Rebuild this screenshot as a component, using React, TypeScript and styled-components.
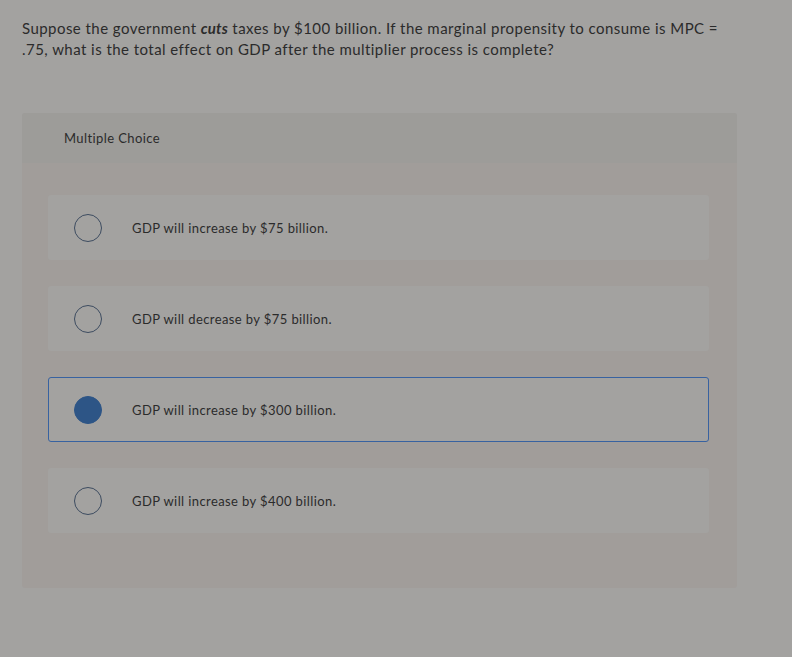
import styled, { createGlobalStyle } from 'styled-components'

const GlobalStyle = createGlobalStyle`
    html, body {
        margin: 0;
        padding: 0;
        background: #a3a2a0;
    }
    body {
        font-family: Lato, "Open Sans", "Liberation Sans", sans-serif;
        color: #2b2b2b;
    }
`

interface ChoiceItem {
    label: string
    selected?: boolean
}

const choices: ChoiceItem[] = [
    { label: 'GDP will increase by $75 billion.' },
    { label: 'GDP will decrease by $75 billion.' },
    { label: 'GDP will increase by $300 billion.', selected: true },
    { label: 'GDP will increase by $400 billion.' },
]

const App = () => {
    return (
        <>
            <GlobalStyle />
            <Page>
                <Question>
                    Suppose the government <Emph>cuts</Emph> taxes by $100 billion. If the marginal propensity to consume is MPC =
                    <br />
                    .75, what is the total effect on GDP after the multiplier process is complete?
                </Question>
                <Card>
                    <CardHeader>Multiple Choice</CardHeader>
                    <ChoiceList>
                        {
                            choices.map(choice => {
                                return (
                                    <ChoiceRow key={choice.label} selected={choice.selected}>
                                        <Radio selected={choice.selected} />
                                        <ChoiceText>{choice.label}</ChoiceText>
                                    </ChoiceRow>
                                )
                            })
                        }
                    </ChoiceList>
                </Card>
            </Page>
        </>
    )
}
export default App


const Page = styled.div`
    width: 792px;
    height: 657px;
    padding: 18px 0 0 22px;
    box-sizing: border-box;
`
const Question = styled.p`
    margin: 0;
    font-size: 15px;
    line-height: 21px;
    letter-spacing: 0.45px;
    color: #2b2b2b;
    white-space: nowrap;
`
const Emph = styled.b`
    font-weight: 700;
    font-style: italic;
    letter-spacing: 0.2px;
`
const Card = styled.div`
    margin-top: 53px;
    width: 715px;
    height: 475px;
    background-color: #a19d9a;
    border-radius: 3px;
`
const CardHeader = styled.div`
    display: flex;
    align-items: center;
    height: 50px;
    padding-left: 42px;
    background-color: #9d9c99;
    border-radius: 3px 3px 0 0;
    font-size: 13px;
    letter-spacing: 0.4px;
    color: #2b2b2b;
`
const ChoiceList = styled.div`
    display: flex;
    flex-direction: column;
    gap: 26px;
    padding: 32px 0 0 26px;
`
const ChoiceRow = styled.div<{ selected?: boolean }>`
    display: flex;
    align-items: center;
    width: 661px;
    height: 65px;
    box-sizing: border-box;
    padding-left: 25px;
    background-color: #a3a2a0;
    border-radius: 3px;
    border: 1px solid ${props => props.selected ? '#3862a0' : 'transparent'};
`
const Radio = styled.span<{ selected?: boolean }>`
    width: 28px;
    height: 28px;
    box-sizing: border-box;
    border-radius: 50%;
    border: 1.5px solid ${props => props.selected ? '#2d5586' : '#3d4c60'};
    background-color: ${props => props.selected ? '#2d5586' : 'transparent'};
    flex-shrink: 0;
`
const ChoiceText = styled.span`
    margin-left: 30px;
    font-size: 13px;
    letter-spacing: 0.4px;
    color: #2b2b2b;
`
